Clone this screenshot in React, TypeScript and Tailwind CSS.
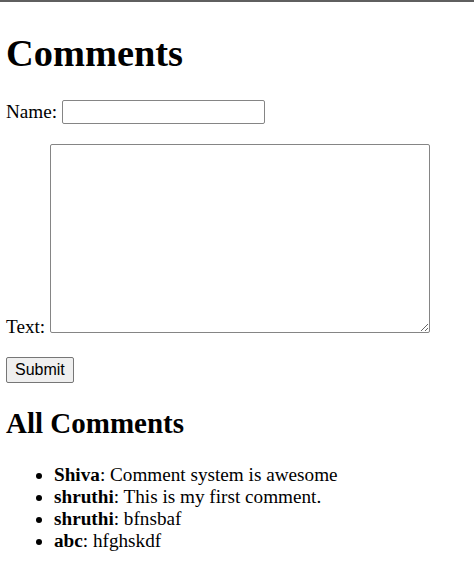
import React, { useState } from 'react';

interface CommentItem {
    name: string;
    text: string;
}

const initialComments: CommentItem[] = [
    { name: 'Shiva', text: 'Comment system is awesome' },
    { name: 'shruthi', text: 'This is my first comment.' },
    { name: 'shruthi', text: 'bfnsbaf' },
    { name: 'abc', text: 'hfghskdf' },
];

const App: React.FC = () => {
    const [comments, setComments] = useState<CommentItem[]>(initialComments);
    const [name, setName] = useState('');
    const [text, setText] = useState('');

    const handleSubmit = (e: React.FormEvent) => {
        e.preventDefault();
        if (!name.trim() || !text.trim()) return;
        setComments([...comments, { name, text }]);
        setName('');
        setText('');
    };

    return (
        <div className="min-h-[570px] bg-white border-t-2 border-[#5f5f5f] px-[6px] text-black text-[19.2px] leading-[normal] font-['Liberation_Serif',serif]">
            <h1 className="mt-[29px] text-[38.4px] font-bold leading-[normal]">Comments</h1>

            <form onSubmit={handleSubmit}>
                {/* Name field */}
                <label className="mt-[25px] flex items-center gap-[5px]">
                    <span>Name:</span>
                    <input
                        type="text"
                        value={name}
                        onChange={(e) => setName(e.target.value)}
                        className="w-[203px] h-[24px] border border-[#858585] rounded-[2px] bg-white px-[2px] text-[16px] font-['Liberation_Sans',sans-serif] outline-none"
                    />
                </label>

                {/* Text field - label sits on the textarea's bottom edge */}
                <label className="block mt-[20px]">
                    Text:{' '}
                    <textarea
                        value={text}
                        onChange={(e) => setText(e.target.value)}
                        className="inline-block align-baseline w-[380px] h-[189px] border border-[#858585] rounded-[2px] bg-white p-[2px] text-[16px] font-['Liberation_Mono',monospace] outline-none resize"
                    />
                </label>

                <button
                    type="submit"
                    className="block mt-[19px] h-[26px] px-[8px] border border-[#767676] rounded-[2px] bg-[#efefef] text-[16px] leading-none font-['Liberation_Sans',sans-serif]"
                >
                    Submit
                </button>
            </form>

            <h2 className="mt-[24px] text-[29px] font-bold leading-[normal]">All Comments</h2>

            <ul className="mt-[24px] pl-[48px] list-disc">
                {comments.map((c, i) => (
                    <li key={i}>
                        <strong className="font-bold">{c.name}</strong>: {c.text}
                    </li>
                ))}
            </ul>
        </div>
    );
};

export default App;
